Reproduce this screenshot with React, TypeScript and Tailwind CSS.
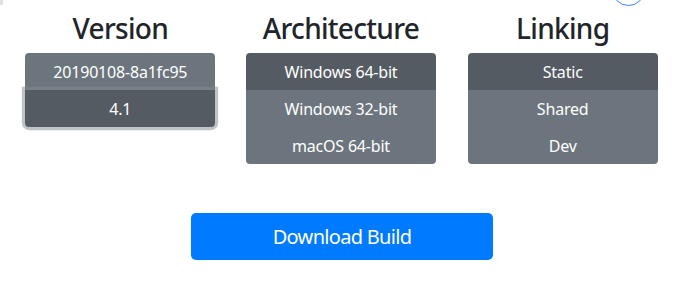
import React from "react";

const font = { fontFamily: '"Noto Sans", "Open Sans", sans-serif' };

function Group({ items, active }: { items: string[]; active: number }) {
  return (
    <div className="w-[190px] mx-auto flex flex-col rounded-[4px]">
      {items.map((t, i) => {
        const isActive = i === active;
        const first = i === 0;
        const last = i === items.length - 1;
        return (
          <div
            key={t}
            className={
              "h-[37px] flex items-center justify-center text-white text-[16px] tracking-[-0.2px] " +
              (isActive ? "bg-[#545b62] " : "bg-[#6c757d] ") +
              (first ? "rounded-t-[4px] " : "") +
              (last ? "rounded-b-[4px] " : "") +
              (isActive && !first ? "relative z-10 shadow-[0_0_0_3.2px_rgba(130,138,145,0.5)] " : "")
            }
          >
            {t}
          </div>
        );
      })}
    </div>
  );
}

export default function App() {
  return (
    <div className="relative w-[682px] h-[287px] bg-white overflow-hidden text-[#212529]" style={font}>
      <div className="absolute left-0 top-0 w-[3px] h-[5px] bg-[#e0e0e0]" />
      <div className="absolute left-[612px] top-[-27px] w-[33px] h-[33px] rounded-full border border-[#3b82f6]" />
      <div className="flex px-[10px] pt-[11px]">
        <div className="w-[221px]">
          <h3 className="text-[28px] leading-[34px] font-medium text-center mb-[8px] tracking-[-0.7px]">Version</h3>
          <Group items={["20190108-8a1fc95", "4.1"]} active={1} />
        </div>
        <div className="w-[221px]">
          <h3 className="text-[28px] leading-[34px] font-medium text-center mb-[8px] tracking-[-0.7px]">Architecture</h3>
          <Group items={["Windows 64-bit", "Windows 32-bit", "macOS 64-bit"]} active={0} />
        </div>
        <div className="w-[221px] pl-[2px]">
          <h3 className="text-[28px] leading-[34px] font-medium text-center mb-[8px] tracking-[-0.7px]">Linking</h3>
          <Group items={["Static", "Shared", "Dev"]} active={0} />
        </div>
      </div>
      <div className="flex justify-center mt-[49px]">
        <button className="w-[302px] h-[47px] bg-[#007bff] text-white text-[20px] tracking-[-0.7px] rounded-[5px] ml-[2px]">
          Download Build
        </button>
      </div>
    </div>
  );
}
